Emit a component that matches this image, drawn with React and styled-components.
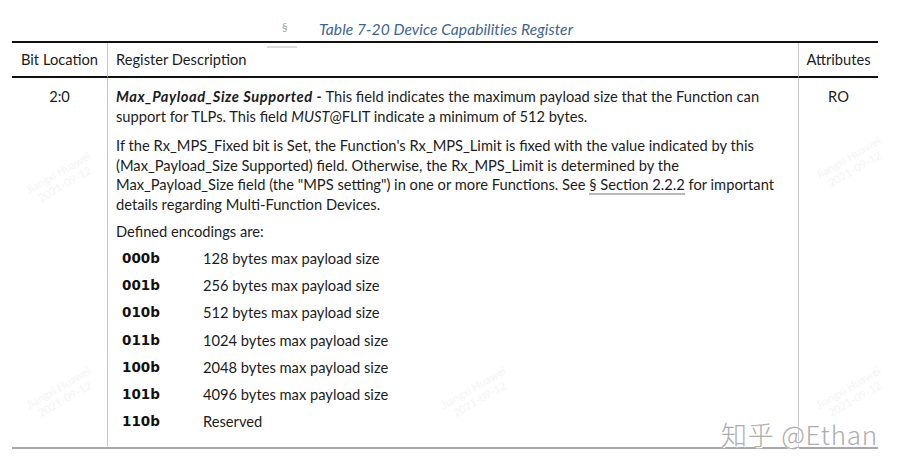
import styled, { createGlobalStyle } from "styled-components";

const Global = createGlobalStyle`
html, body {
  margin: 0;
  padding: 0;
  background: #ffffff;
}
body {
  font-family: Lato, "Noto Sans", sans-serif;
  color: #1c1c1c;
}
`

const Page = styled.div`
position: relative;
width: 904px;
height: 470px;
overflow: hidden;
background: #fff;
`

const Caption = styled.div`
display: flex;
align-items: flex-end;
height: 41px;
padding-left: 280px;
padding-bottom: 3px;
box-sizing: border-box;
`

const Para = styled.span`
position: relative;
width: 37px;
font-size: 11px;
color: #9aa3ad;
padding-left: 2px;
margin-bottom: 5px;
&::after {
  content: "";
  position: absolute;
  left: -13px;
  top: 26px;
  width: 30px;
  height: 2px;
  background: #dcdcdc;
}
`

const CaptionText = styled.span`
font-size: 15.6px;
font-style: italic;
color: #3d6591;
letter-spacing: 0.05px;
`

const Table = styled.div`
margin-left: 12px;
width: 866px;
display: grid;
grid-template-columns: 95px 691px 80px;
border-top: 2px solid #111;
border-bottom: 2px solid #a8a8a8;
`

const Cell = styled.div`
font-size: 14.7px;
line-height: 19.6px;
border-left: ${(p) => (p.$first ? "none" : "1px solid #c9c9c9")};
border-bottom: ${(p) => (p.$head ? "2px solid #111" : "none")};
height: ${(p) => (p.$head ? "35px" : "auto")};
display: flex;
align-items: ${(p) => (p.$head ? "center" : "flex-start")};
justify-content: ${(p) => (p.$left ? "flex-start" : "center")};
padding: ${(p) => (p.$head ? "0 8px" : "9px 8px 0 8px")};
box-sizing: border-box;
white-space: nowrap;
`

const Desc = styled.div`
padding: 9px 0 12px 8px;
border-left: 1px solid #c9c9c9;
font-size: 14.7px;
line-height: 19.6px;
white-space: nowrap;
`

const P = styled.p`
margin: ${(p) => (p.$first ? "0" : `${p.$gap || 10}px 0 0 0`)};
`

const Lead = styled.b`
font-style: italic;
letter-spacing: 0.55px;
`

const Link = styled.span`
border-bottom: 2px solid #b9b9b9;
padding-bottom: 0;
`

const EncList = styled.div`
margin-top: 4px;
padding-left: 6px;
`

const EncRow = styled.div`
display: flex;
align-items: center;
height: 27.2px;
`

const Code = styled.span`
width: 81px;
font-family: "DejaVu Sans", sans-serif;
font-weight: 700;
font-size: 13.5px;
color: #111;
`

const Mark = styled.div`
position: absolute;
left: 721px;
top: 415px;
font-family: "Noto Sans CJK SC", "DejaVu Sans", sans-serif;
font-size: 26px;
font-weight: 300;
color: #adadad;
letter-spacing: 0.8px;
text-shadow: 1px 1px 0 #fff, -1px -1px 0 #fff;
`

const Faint = styled.div`
position: absolute;
left: ${(p) => p.$x}px;
top: ${(p) => p.$y}px;
transform: rotate(-30deg);
font-family: Lato, sans-serif;
font-size: 11px;
line-height: 13px;
color: #f4f4f4;
text-align: center;
pointer-events: none;
`

const encodings = [
  ["000b", "128 bytes max payload size"],
  ["001b", "256 bytes max payload size"],
  ["010b", "512 bytes max payload size"],
  ["011b", "1024 bytes max payload size"],
  ["100b", "2048 bytes max payload size"],
  ["101b", "4096 bytes max payload size"],
  ["110b", "Reserved"],
]

const faintMarks = [
  [25, 165],
  [815, 150],
  [25, 380],
  [440, 380],
  [815, 380],
]

const App = () => {
  return (
    <Page>
      <Global />
      <Caption>
        <Para>§</Para>
        <CaptionText>Table 7-20 Device Capabilities Register</CaptionText>
      </Caption>
      <Table>
        <Cell $first $head>Bit Location</Cell>
        <Cell $head $left>Register Description</Cell>
        <Cell $head>Attributes</Cell>
        <Cell $first>2:0</Cell>
        <Desc>
          <P $first>
            <Lead>Max_Payload_Size Supported -</Lead> This field indicates the maximum payload size that the Function can<br />
            support for TLPs. This field <i>MUST</i>@FLIT indicate a minimum of 512 bytes.
          </P>
          <P>
            If the Rx_MPS_Fixed bit is Set, the Function's Rx_MPS_Limit is fixed with the value indicated by this<br />
            (Max_Payload_Size Supported) field. Otherwise, the Rx_MPS_Limit is determined by the<br />
            Max_Payload_Size field (the "MPS setting") in one or more Functions. See <Link>§ Section 2.2.2</Link> for important<br />
            details regarding Multi-Function Devices.
          </P>
          <P $gap={7}>Defined encodings are:</P>
          <EncList>
            {encodings.map(([code, text]) => (
              <EncRow key={code}>
                <Code>{code}</Code>
                <span>{text}</span>
              </EncRow>
            ))}
          </EncList>
        </Desc>
        <Cell>RO</Cell>
      </Table>
      {faintMarks.map(([x, y]) => (
        <Faint key={x + "-" + y} $x={x} $y={y}>Jiangxi Huawei<br />2021-09-12</Faint>
      ))}
      <Mark>知乎 @Ethan</Mark>
    </Page>
  )
}

export default App;
